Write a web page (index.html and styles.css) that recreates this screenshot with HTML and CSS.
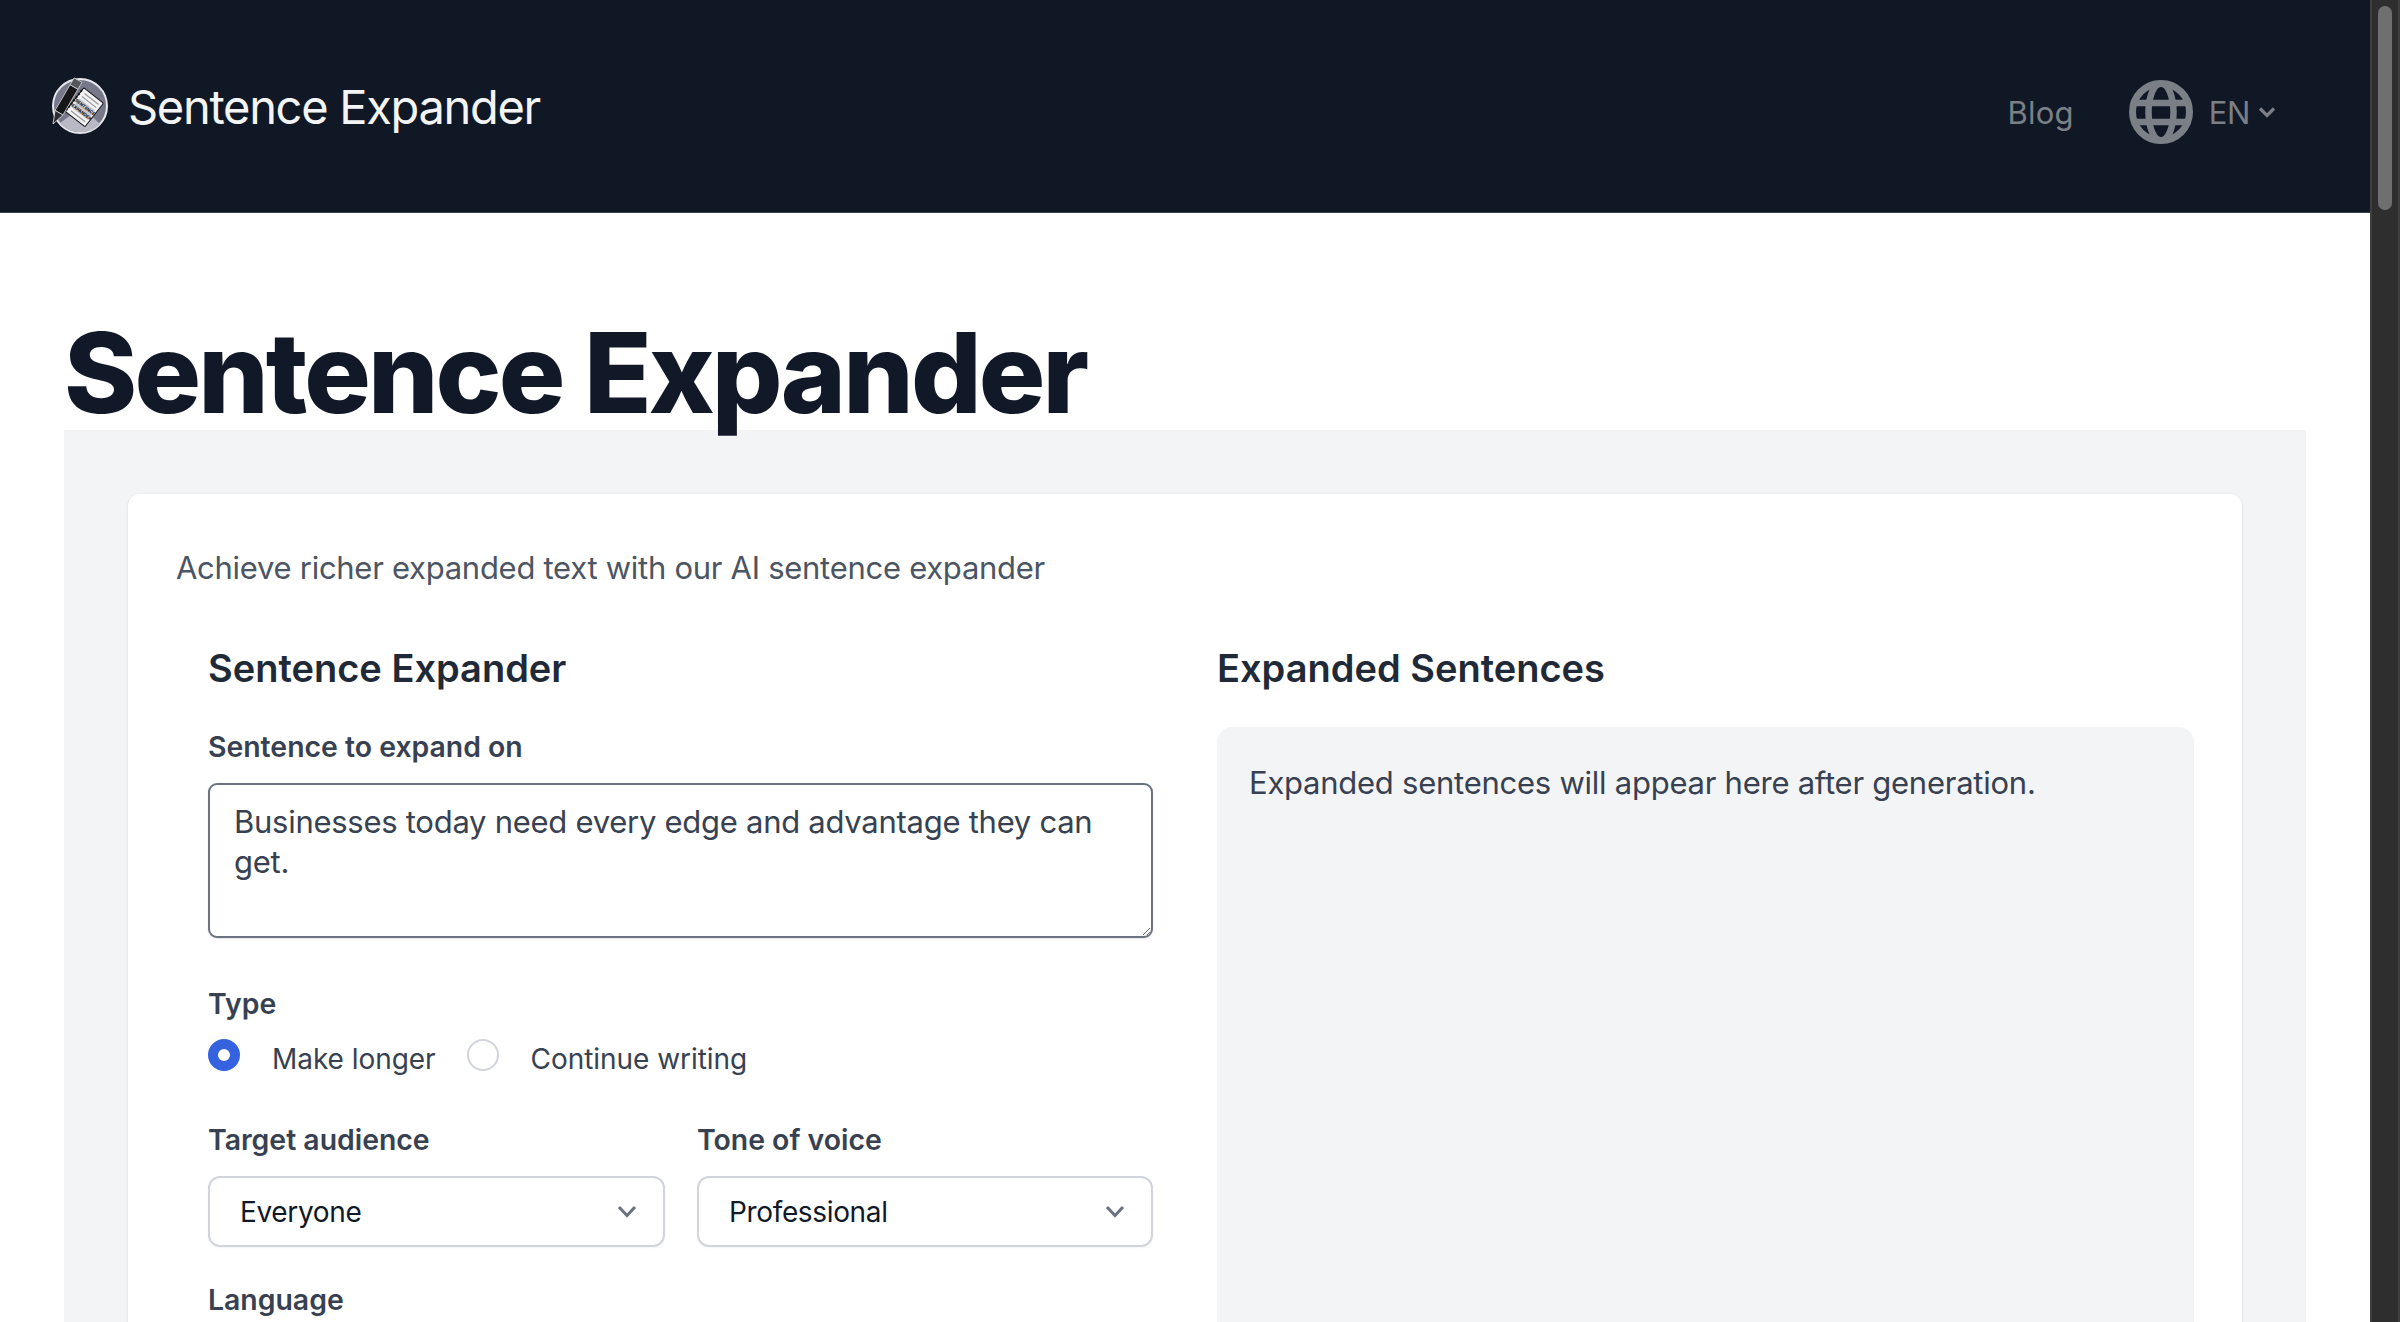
FILE: index.html
```html
<!DOCTYPE html>
<html lang="en">
<head>
  <meta charset="UTF-8">
  <title>Sentence Expander</title>
  <link rel="stylesheet" href="styles.css">
</head>
<body>

  <div class="page">
    <header class="topbar">
      <a class="brand" href="#">
        <svg class="brand-logo" viewBox="0 0 56 57" aria-hidden="true">
          <circle cx="28" cy="29" r="27" fill="#77798a" stroke="#e8e9ee" stroke-width="2"/>
          <path d="M8 46 A27 27 0 0 0 48 47 L30 30z" fill="#b8b9c4"/>
          <g transform="rotate(38 32 30)">
            <rect x="20" y="15" width="25" height="30" rx="1" fill="#f2f2f4" stroke="#111" stroke-width="1"/>
            <path d="M24 19h18M24 23h18M24 41h18" stroke="#9a9a9a" stroke-width="1.2"/>
            <rect x="23" y="26" width="20" height="12" fill="#c9c9cd"/>
            <text class="logo-text" x="33" y="31" text-anchor="middle">SENTENCE</text>
            <text class="logo-text" x="33" y="37" text-anchor="middle">EXPANDER</text>
            <path d="M20 18v25" stroke="#111" stroke-width="2" stroke-dasharray="2 2"/>
          </g>
          <path d="M3.1 33.4l7.8 4.6 15-25.8-7.8-4.5z" fill="#17171a" stroke="#d5d5da" stroke-width="0.8"/>
          <path d="M18.1 7.7l7.8 4.5 4.1-6.9-8-4.4z" fill="#55555b" stroke="#d5d5da" stroke-width="0.8"/>
          <path d="M3.1 33.4l7.8 4.6-9.9 9z" fill="#2b2b30" stroke="#e4e4e8" stroke-width="0.8"/>
        </svg>
        <span class="brand-name">Sentence Expander</span>
      </a>
      <nav class="topnav">
        <a class="nav-link" href="#">Blog</a>
        <div class="lang">
          <svg class="globe" viewBox="0 0 64 64" aria-hidden="true">
            <circle cx="32" cy="32" r="28.5" fill="none" stroke="currentColor" stroke-width="7"/>
            <ellipse cx="32" cy="32" rx="12.5" ry="28.5" fill="none" stroke="currentColor" stroke-width="6.5"/>
            <path d="M5 23h54M5 42h54" stroke="currentColor" stroke-width="6.5"/>
          </svg>
          <span class="lang-code">EN</span>
          <svg class="lang-caret" viewBox="0 0 18 12" aria-hidden="true">
            <path d="M2 2.5l7 7 7-7" fill="none" stroke="currentColor" stroke-width="3.2"/>
          </svg>
        </div>
      </nav>
    </header>

    <main class="content">
      <h1 class="page-title">Sentence Expander</h1>

      <section class="panel">
        <div class="card">
          <p class="intro">Achieve richer expanded text with our AI sentence expander</p>

          <div class="columns">
            <form class="tool-form">
              <h2 class="col-title">Sentence Expander</h2>

              <label class="field-label" for="sentence">Sentence to expand on</label>
              <textarea class="sentence-input" id="sentence">Businesses today need every edge and advantage they can get.</textarea>

              <div class="field-label type-label">Type</div>
              <div class="radio-row">
                <span class="radio radio-on"></span>
                <span class="radio-text">Make longer</span>
                <span class="radio"></span>
                <span class="radio-text">Continue writing</span>
              </div>

              <div class="select-row">
                <div>
                  <div class="field-label">Target audience</div>
                  <div class="select-box">
                    <span>Everyone</span>
                    <svg class="select-caret" viewBox="0 0 20 13" aria-hidden="true"><path d="M2 2l8 8.5 8-8.5" fill="none" stroke="currentColor" stroke-width="3"/></svg>
                  </div>
                </div>
                <div>
                  <div class="field-label">Tone of voice</div>
                  <div class="select-box">
                    <span>Professional</span>
                    <svg class="select-caret" viewBox="0 0 20 13" aria-hidden="true"><path d="M2 2l8 8.5 8-8.5" fill="none" stroke="currentColor" stroke-width="3"/></svg>
                  </div>
                </div>
              </div>

              <div class="field-label language-label">Language</div>
            </form>

            <div class="result">
              <h2 class="col-title">Expanded Sentences</h2>
              <div class="result-box">Expanded sentences will appear here after generation.</div>
            </div>
          </div>
        </div>
      </section>
    </main>
  </div>

  <div class="scrollbar"><div class="scrollbar-thumb"></div></div>

</body>
</html>
```

FILE: styles.css
```css
* {
  box-sizing: border-box;
}

html, body {
  height: 100%;
}

body {
  margin: 0;
  display: flex;
  overflow: hidden;
  background: #fff;
  color: #111827;
  font-family: Inter, "Liberation Sans", sans-serif;
}

a {
  color: inherit;
  text-decoration: none;
}

.page {
  flex: 1;
  min-width: 0;
  height: 100vh;
  overflow: hidden;
}

/* top bar */
.topbar {
  display: flex;
  justify-content: space-between;
  height: 213px;
  padding: 77px 94px 0 52px;
  background: #111825;
  border-bottom: 1px solid #374151;
}

.brand {
  display: flex;
  align-items: center;
  gap: 20px;
  height: 57px;
}

.brand-logo {
  width: 56px;
  height: 57px;
}

.logo-text {
  font-size: 4.4px;
  font-weight: 800;
  fill: #1b1b1f;
}

.brand-name {
  padding-top: 2px;
  font-size: 47px;
  letter-spacing: -1.3px;
  color: #f3f4f6;
}

.topnav {
  display: flex;
  align-items: center;
  gap: 55px;
  height: 70px;
  color: #7b7f86;
  font-size: 31px;
}

.nav-link {
  letter-spacing: 0.2px;
}

.lang {
  display: flex;
  align-items: center;
}

.globe {
  width: 64px;
  height: 64px;
  margin-right: 16px;
}

.lang-code {
  letter-spacing: -0.4px;
}

.lang-caret {
  width: 18px;
  height: 12px;
  margin-left: 8px;
}

/* main area */
.content {
  padding: 0 64px;
}

.page-title {
  margin: 0;
  padding: 106px 0 4px;
  font-size: 111px;
  line-height: 107px;
  font-weight: 800;
  letter-spacing: -0.026em;
  color: #111827;
}

.panel {
  padding: 64px;
  background: #f3f4f6;
}

.card {
  padding: 50px 48px 60px;
  background: #fff;
  border-radius: 12px;
  box-shadow: 0 1px 3px rgba(0, 0, 0, 0.1), 0 1px 2px rgba(0, 0, 0, 0.06);
}

.intro {
  margin: 0 0 49px;
  font-size: 31px;
  letter-spacing: -0.28px;
  line-height: 48px;
  color: #4b5563;
}

.columns {
  display: grid;
  grid-template-columns: 945px 1fr;
  gap: 64px;
  padding-left: 32px;
}

.col-title {
  margin: 0 0 32px;
  font-size: 38px;
  line-height: 54px;
  font-weight: 600;
  color: #1f2937;
}

.field-label {
  display: block;
  font-size: 28.4px;
  line-height: 40px;
  font-weight: 600;
  color: #374151;
}

.sentence-input {
  display: block;
  width: 945px;
  height: 155px;
  margin-top: 16px;
  padding: 17px 24px;
  border: 2px solid #6b7280;
  border-radius: 9px;
  font-family: inherit;
  font-size: 31px;
  letter-spacing: -0.27px;
  line-height: 40px;
  color: #374151;
  box-shadow: 0 1px 2px rgba(0, 0, 0, 0.1);
}

.type-label {
  margin-top: 46px;
}

.radio-row {
  display: flex;
  align-items: flex-start;
  margin-top: 15px;
  height: 42px;
}

.radio {
  width: 32px;
  height: 32px;
  flex: none;
  border: 2px solid #d1d5db;
  border-radius: 50%;
  background: #fff;
}

.radio-on {
  border: 10px solid #3563e0;
}

.radio-text {
  margin: -1px 31px 0 32px;
  font-size: 28px;
  letter-spacing: -0.05px;
  line-height: 42px;
  color: #374151;
}

.select-row {
  display: grid;
  grid-template-columns: 457px 456px;
  gap: 32px;
  margin-top: 39px;
}

.select-box {
  display: flex;
  align-items: center;
  justify-content: space-between;
  height: 71px;
  margin-top: 16px;
  padding: 0 26px 0 30px;
  border: 2px solid #d1d5db;
  border-radius: 12px;
  font-size: 28px;
  letter-spacing: -0.35px;
  color: #111827;
  box-shadow: 0 1px 2px rgba(0, 0, 0, 0.05);
}

.select-caret {
  width: 20px;
  height: 13px;
  color: #6b7280;
}

.language-label {
  margin-top: 33px;
}

.result-box {
  height: 900px;
  padding: 36px 32px;
  background: #f3f4f6;
  border-radius: 15px;
  font-size: 31px;
  letter-spacing: -0.25px;
  line-height: 40px;
  color: #374151;
}

/* fake window scrollbar */
.scrollbar {
  flex: none;
  width: 30px;
  height: 100vh;
  padding: 6px 6px 0 6px;
  background: #2e2e2e;
  border-left: 2px solid #3f3f3f;
  border-right: 2px solid #3f3f3f;
}

.scrollbar-thumb {
  height: 204px;
  border-radius: 8px;
  background: #6f6f6f;
}
```
